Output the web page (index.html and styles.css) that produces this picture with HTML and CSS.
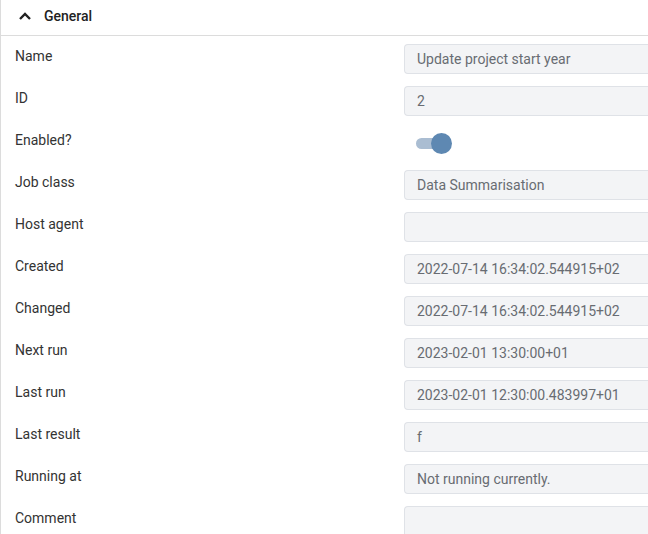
FILE: index.html
```html
<!DOCTYPE html>
<html>
<head>
<meta charset="utf-8">
<link rel="stylesheet" href="styles.css">
</head>
<body>
<div class="panel">
  <div class="panel-header">
    <svg class="chevron" width="14" height="10" viewBox="0 0 14 10"><path d="M2 8 L7 3 L12 8" fill="none" stroke="#222" stroke-width="2.4"/></svg>
    <span class="title">General</span>
  </div>
  <div class="form">
    <div class="row"><div class="label">Name</div><div class="field">Update project start year</div></div>
    <div class="row"><div class="label">ID</div><div class="field">2</div></div>
    <div class="row"><div class="label">Enabled?</div><div class="toggle-wrap"><span class="toggle"><span class="track"></span><span class="thumb"></span></span></div></div>
    <div class="row"><div class="label">Job class</div><div class="field">Data Summarisation</div></div>
    <div class="row"><div class="label">Host agent</div><div class="field"></div></div>
    <div class="row"><div class="label">Created</div><div class="field">2022-07-14 16:34:02.544915+02</div></div>
    <div class="row"><div class="label">Changed</div><div class="field">2022-07-14 16:34:02.544915+02</div></div>
    <div class="row"><div class="label">Next run</div><div class="field">2023-02-01 13:30:00+01</div></div>
    <div class="row"><div class="label">Last run</div><div class="field">2023-02-01 12:30:00.483997+01</div></div>
    <div class="row"><div class="label">Last result</div><div class="field">f</div></div>
    <div class="row"><div class="label">Running at</div><div class="field">Not running currently.</div></div>
    <div class="row row-last"><div class="label">Comment</div><div class="field field-tall"></div></div>
  </div>
</div>
</body>
</html>
```
FILE: styles.css
```css
html, body {
  margin: 0;
  padding: 0;
  overflow: hidden;
  background: #ffffff;
  font-family: Roboto, "Liberation Sans", sans-serif;
  font-size: 14px;
}
.panel {
  width: 648px;
  height: 534px;
  box-sizing: border-box;
  border-left: 1px solid #dcdcdc;
}
.panel-header {
  height: 36px;
  border-bottom: 1px solid #dcdcdc;
  display: flex;
  align-items: center;
  padding-left: 17px;
  box-sizing: border-box;
  padding-bottom: 3px;
}
.chevron {
  display: block;
  margin-right: 12px;
}
.title {
  font-weight: 500;
  color: #222222;
  font-size: 14px;
}
.form {
  padding: 8px 0 0 14px;
  display: flex;
  flex-direction: column;
  gap: 12px;
}
.row {
  display: grid;
  grid-template-columns: 389px 1fr;
  height: 30px;
}
.row-last {
  height: 28px;
}
.label {
  color: #333333;
  line-height: 16px;
  padding-top: 4px;
}
.field {
  height: 30px;
  box-sizing: border-box;
  background: #f3f4f6;
  border: 1px solid #dfe2e7;
  border-right: none;
  border-radius: 4px 0 0 4px;
  padding: 0 12px;
  line-height: 28px;
  color: #686c72;
}
.field-tall {
  height: 28px;
  border-bottom: none;
  border-radius: 4px 0 0 0;
}
.toggle-wrap {
  display: flex;
  align-items: center;
  padding-left: 12px;
  height: 30px;
}
.toggle {
  position: relative;
  display: block;
  width: 36px;
  height: 22px;
}
.track {
  position: absolute;
  left: 0;
  top: 6px;
  width: 32px;
  height: 11px;
  border-radius: 6px;
  background: #aabdd2;
}
.thumb {
  position: absolute;
  left: 15px;
  top: 1px;
  width: 21px;
  height: 21px;
  border-radius: 50%;
  background: #5e88b2;
}
```
